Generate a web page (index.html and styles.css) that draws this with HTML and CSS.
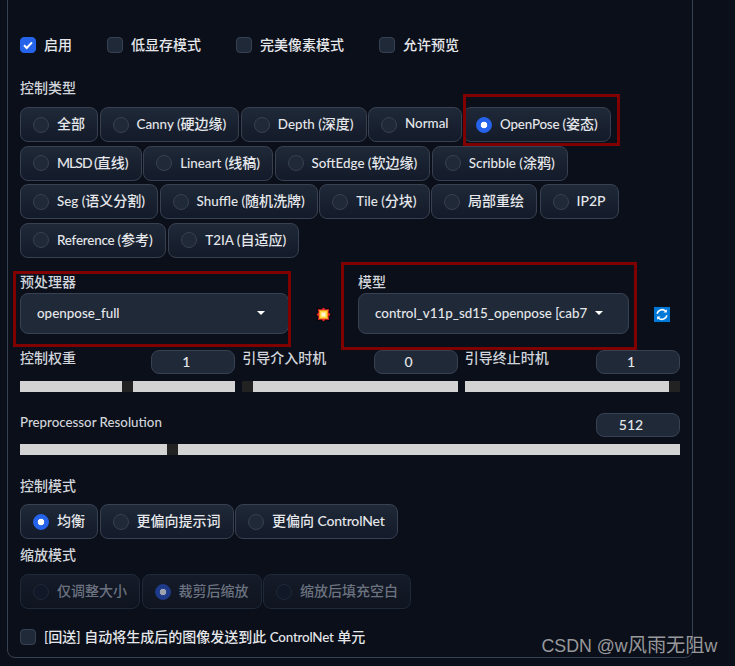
FILE: index.html
```html
<!DOCTYPE html>
<html lang="zh-CN">
<head>
<meta charset="utf-8">
<title>ControlNet</title>
<link rel="stylesheet" href="styles.css">
</head>
<body>
<main class="panel">
  <div class="checks">
    <label class="check"><span class="box on"><svg viewBox="0 0 16 16" width="16" height="16"><path d="M4 8.3l2.7 2.7L12 5.4" fill="none" stroke="#fff" stroke-width="2"/></svg></span>启用</label>
    <label class="check"><span class="box"></span>低显存模式</label>
    <label class="check"><span class="box"></span>完美像素模式</label>
    <label class="check"><span class="box"></span>允许预览</label>
  </div>

  <div class="label type-label">控制类型</div>
  <div class="radios">
    <span class="radio"><i class="dot"></i><span class="t">全部</span></span>
    <span class="radio"><i class="dot"></i><span class="t"><span class="l">Canny (</span>硬边缘)</span></span>
    <span class="radio"><i class="dot"></i><span class="t"><span class="l">Depth (</span>深度)</span></span>
    <span class="radio"><i class="dot"></i><span class="t l">Normal</span></span>
    <span class="radio"><i class="dot on"></i><span class="t"><span class="l tight">OpenPose (</span>姿态)</span></span>
    <span class="radio"><i class="dot"></i><span class="t"><span class="tighter">MLSD (</span>直线)</span></span>
    <span class="radio"><i class="dot"></i><span class="t"><span class="l">Lineart (</span>线稿)</span></span>
    <span class="radio"><i class="dot"></i><span class="t"><span class="l">SoftEdge (</span>软边缘)</span></span>
    <span class="radio"><i class="dot"></i><span class="t"><span class="l">Scribble (</span>涂鸦)</span></span>
    <span class="radio"><i class="dot"></i><span class="t"><span class="l">Seg (</span>语义分割)</span></span>
    <span class="radio"><i class="dot"></i><span class="t"><span class="l">Shuffle (</span>随机洗牌)</span></span>
    <span class="radio"><i class="dot"></i><span class="t"><span class="l">Tile (</span>分块)</span></span>
    <span class="radio"><i class="dot"></i><span class="t">局部重绘</span></span>
    <span class="radio gap-left"><i class="dot"></i><span class="t">IP2P</span></span>
    <span class="radio"><i class="dot"></i><span class="t"><span class="l tight">Reference (</span>参考)</span></span>
    <span class="radio gap-left"><i class="dot"></i><span class="t"><span class="l">T2IA (</span>自适应)</span></span>
  </div>

  <div class="selects">
    <div class="sel-col pre">
      <div class="label">预处理器</div>
      <div class="select"><span class="sel-text">openpose_full</span><i class="caret"></i></div>
    </div>
    <div class="boom">
      <svg viewBox="0 0 17 17" width="17" height="17">
        <polygon points="8.5,0 10,3 15.5,1.5 14,6.5 17,8.5 14,10.5 15.5,15.5 10.5,14 8.5,17 6.5,14 1.5,15.5 3,10.5 0,8.5 3,6.5 1.5,1.5 7,3" fill="#0a0406"/>
        <polygon points="8.5,1.5 10.5,3.5 14,3 13.5,6.5 15.5,8.5 13.5,10.5 14,14 10.5,13.5 8.5,15.5 6.5,13.5 3,14 3.5,10.5 1.5,8.5 3.5,6.5 3,3 6.5,3.5" fill="#ee2a2f"/>
        <rect x="4" y="4" width="9" height="9" fill="#fb8f1e"/>
        <rect x="5" y="5" width="7" height="7" fill="#ffd83a"/>
        <rect x="6.5" y="6.5" width="4" height="4" fill="#fff6d8"/>
      </svg>
    </div>
    <div class="sel-col model">
      <div class="label">模型</div>
      <div class="select"><span class="sel-text">control_v11p_sd15_openpose [cab7</span><i class="caret"></i></div>
    </div>
    <div class="refresh">
      <svg viewBox="0 0 18 18" width="18" height="17" preserveAspectRatio="none">
        <rect x="0.5" y="0.5" width="17" height="17" fill="#0078d7" stroke="#05101c"/>
        <path d="M4.2 8.2A4.9 4.9 0 0 1 12.6 5.4M13.8 9.8A4.9 4.9 0 0 1 5.4 12.6" fill="none" stroke="#fff" stroke-width="1.6"/>
        <path d="M13.8 3.4v3.4h-3.4zM4.2 14.6v-3.4h3.4z" fill="#fff"/>
      </svg>
    </div>
  </div>

  <div class="triple">
    <div class="slider">
      <div class="head"><span class="slabel">控制权重</span><span class="num">1</span></div>
      <div class="track"><i style="flex:102"></i><b></b><i style="flex:102"></i></div>
    </div>
    <div class="slider">
      <div class="head"><span class="slabel">引导介入时机</span><span class="num">0</span></div>
      <div class="track"><b></b><i style="flex:1"></i></div>
    </div>
    <div class="slider">
      <div class="head"><span class="slabel">引导终止时机</span><span class="num">1</span></div>
      <div class="track"><i style="flex:1"></i><b></b></div>
    </div>
  </div>

  <div class="slider res">
    <div class="head"><span class="slabel en">Preprocessor Resolution</span><span class="num">512</span></div>
    <div class="track"><i style="flex:147"></i><b></b><i style="flex:502"></i></div>
  </div>

  <div class="label mode-label">控制模式</div>
  <div class="radios">
    <span class="radio"><i class="dot on"></i><span class="t">均衡</span></span>
    <span class="radio"><i class="dot"></i><span class="t">更偏向提示词</span></span>
    <span class="radio"><i class="dot"></i><span class="t">更偏向 <span class="tight">ControlNet</span></span></span>
  </div>

  <div class="label scale-label">缩放模式</div>
  <div class="radios off">
    <span class="radio"><i class="dot"></i><span class="t">仅调整大小</span></span>
    <span class="radio"><i class="dot on"></i><span class="t">裁剪后缩放</span></span>
    <span class="radio"><i class="dot"></i><span class="t">缩放后填充空白</span></span>
  </div>

  <label class="check loop"><span class="box"></span><span>[回送] 自动将生成后的图像发送到此 <span class="l tight">ControlNet</span> 单元</span></label>
</main>

<div class="mark mark-pose"></div>
<div class="mark mark-pre"></div>
<div class="mark mark-model"></div>
<div class="watermark">CSDN @w<span class="wm-cjk">风雨无阻</span>w</div>
</body>
</html>
```

FILE: styles.css
```css
html, body {
  margin: 0;
  padding: 0;
  background: #0b0f19;
  height: 666px;
  overflow: hidden;
}

body {
  position: relative;
  font-family: Lato, "Noto Sans CJK SC", sans-serif;
  font-size: 14px;
  font-weight: 500;
  color: #e5e7eb;
}

.panel {
  box-sizing: border-box;
  width: 686px;
  height: 678px;
  margin: -20px 0 0 7px;
  padding: 56px 12px 0;
  border: 1px solid #374151;
  border-radius: 8px;
}

.checks {
  display: flex;
  gap: 35px;
  height: 16px;
}

.check {
  display: flex;
  align-items: center;
  gap: 8px;
  height: 16px;
  line-height: 16px;
  color: #e5e7eb;
}

.box {
  box-sizing: border-box;
  width: 16px;
  height: 16px;
  flex: none;
  background: #1f2937;
  border: 1px solid #374151;
  border-radius: 4px;
}

.box.on {
  background: #2563eb;
  border-color: #2563eb;
}

.box svg {
  display: block;
  margin: -1px;
}

.label {
  line-height: 20px;
  color: #d1d5db;
}

.type-label { margin-top: 25px; margin-bottom: 9px; }
.mode-label { margin-top: 21px; margin-bottom: 8px; }
.scale-label { margin-top: 6px; margin-bottom: 9px; }

.radios {
  display: flex;
  flex-wrap: wrap;
  gap: 3.5px 1.5px;
}

.radio {
  box-sizing: border-box;
  display: flex;
  align-items: center;
  gap: 8px;
  height: 35px;
  padding: 0 12px;
  background: linear-gradient(to bottom, #1f2937, #131a29);
  border: 1px solid #374151;
  border-radius: 8px;
  white-space: nowrap;
  color: #e5e7eb;
}

.radio.gap-left {
  margin-left: 1px;
}

.t { margin-bottom: 3px; }
.l { font-size: 13.4px; }
.tight { letter-spacing: -0.2px; }
.tighter { letter-spacing: -1px; }

.dot {
  box-sizing: border-box;
  flex: none;
  width: 16px;
  height: 16px;
  border-radius: 50%;
  background: #1f2937;
  border: 1px solid #374151;
}

.dot.on {
  background: radial-gradient(circle, #fff 0 3px, #2563eb 3.6px);
  border-color: #2563eb;
}

.off .radio {
  color: #6b7280;
  background: linear-gradient(to bottom, #151b28, #0f1420);
  border-color: #1f2937;
}

.off .dot {
  background: #111827;
  border-color: #1f2937;
}

.off .dot.on {
  background: radial-gradient(circle, #9ca3af 0 3px, #1e3a8a 3.6px);
  border-color: #1e3a8a;
}

.selects {
  display: flex;
  align-items: flex-end;
  margin-top: 14.5px;
}

.sel-col.pre { width: 269px; }
.sel-col.model { width: 271px; }

.sel-col .label {
  margin-bottom: 1px;
}

.select {
  box-sizing: border-box;
  display: flex;
  align-items: center;
  justify-content: space-between;
  height: 41px;
  padding: 0 23px 2px 16px;
  background: #1f2937;
  border: 1px solid #374151;
  border-radius: 8px;
  color: #e5e7eb;
}

.model .select {
  padding-right: 25px;
}

.sel-text {
  white-space: nowrap;
  font-size: 13.4px;
}

.caret {
  flex: none;
  width: 0;
  height: 0;
  margin-left: 8px;
  border-left: 4px solid transparent;
  border-right: 4px solid transparent;
  border-top: 4px solid #fff;
}

.boom {
  width: 69px;
  display: flex;
  justify-content: center;
  margin-bottom: 11px;
}

.refresh {
  margin-left: 24px;
  margin-bottom: 11px;
}

.boom svg, .refresh svg { display: block; }

.triple {
  display: grid;
  grid-template-columns: repeat(3, 1fr);
  gap: 7px;
  margin-top: 16px;
}

.head {
  display: flex;
  justify-content: space-between;
  align-items: flex-start;
  height: 24px;
}

.slabel {
  line-height: 16px;
  color: #d1d5db;
}

.slabel.en {
  margin-top: 1px;
  font-size: 13.3px;
}

.num {
  box-sizing: border-box;
  width: 84px;
  height: 24px;
  padding-right: 14px;
  text-align: center;
  background: #1f2937;
  border: 1px solid #374151;
  border-radius: 8px;
  line-height: 22px;
  color: #e5e7eb;
}

.track {
  display: flex;
  height: 11px;
  margin-top: 7px;
}

.track i {
  display: block;
  background: #d3d3d3;
}

.track b {
  display: block;
  flex: none;
  width: 11px;
  background: #222;
}

.res {
  margin-top: 21px;
}

.loop {
  margin-top: 20px;
}

.mark {
  position: absolute;
  box-sizing: border-box;
  border: 3px solid #800000;
  pointer-events: none;
}

.mark-pose { left: 463px; top: 94px; width: 157px; height: 52px; }
.mark-pre { left: 13px; top: 271px; width: 278px; height: 76px; }
.mark-model { left: 341px; top: 262px; width: 296px; height: 88px; }

.watermark {
  position: absolute;
  left: 541.5px;
  top: 635px;
  font-family: "Liberation Sans", "Noto Sans CJK SC", sans-serif;
  font-size: 17.8px;
  font-weight: 400;
  line-height: 22px;
  color: rgba(200, 200, 200, 0.75);
  white-space: nowrap;
}

.wm-cjk {
  font-size: 19.2px;
}
```
